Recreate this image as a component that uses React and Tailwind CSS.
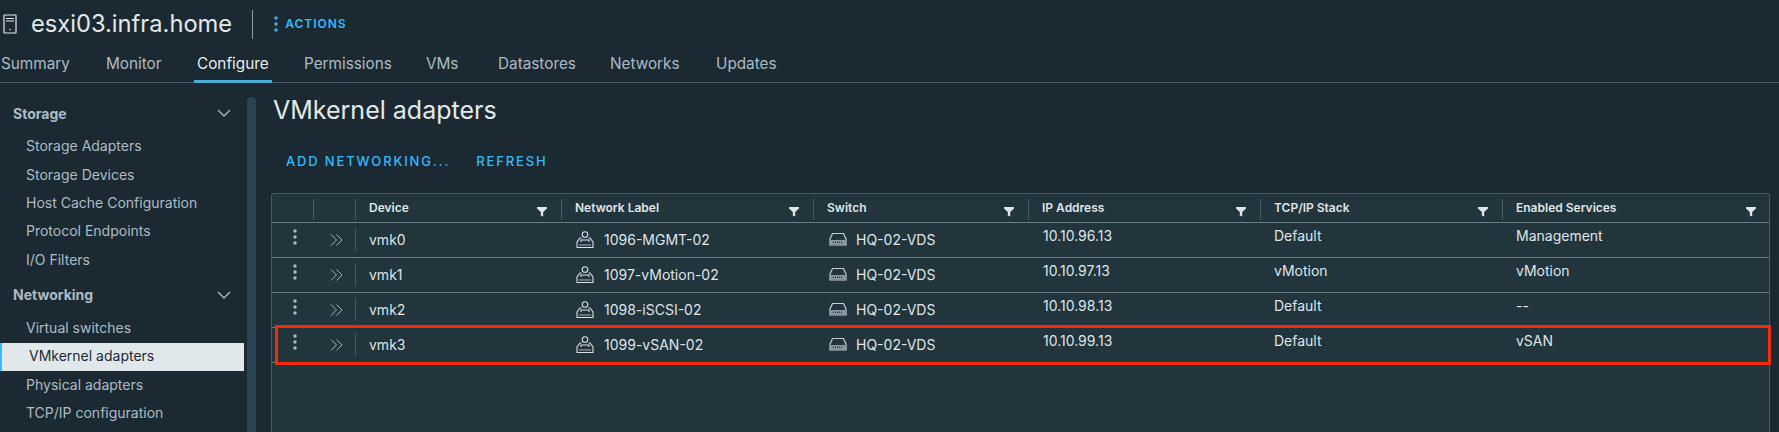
const tabs = [
  { label: "Summary", w: "w-[105px]" },
  { label: "Monitor", w: "w-[91px]" },
  { label: "Configure", w: "w-[107px]", active: true },
  { label: "Permissions", w: "w-[122px]" },
  { label: "VMs", w: "w-[72px]" },
  { label: "Datastores", w: "w-[112px]" },
  { label: "Networks", w: "w-[106px]" },
  { label: "Updates", w: "w-[80px]" },
];

const columns = [
  { label: "Device", w: "w-[206px]" },
  { label: "Network Label", w: "w-[252px]" },
  { label: "Switch", w: "w-[215px]" },
  { label: "IP Address", w: "w-[232px]" },
  { label: "TCP/IP Stack", w: "w-[242px]" },
  { label: "Enabled Services", w: "w-[268px]" },
];

const rows = [
  ["vmk0", "1096-MGMT-02", "10.10.96.13", "Default", "Management"],
  ["vmk1", "1097-vMotion-02", "10.10.97.13", "vMotion", "vMotion"],
  ["vmk2", "1098-iSCSI-02", "10.10.98.13", "Default", "--"],
  ["vmk3", "1099-vSAN-02", "10.10.99.13", "Default", "vSAN"],
];

const HostIcon = () => (
  <svg width="14" height="20" viewBox="0 0 14 20" fill="none" stroke="#e4e8ea" strokeWidth="1.2">
    <rect x="1" y="1" width="12" height="18" rx="0.5" />
    <path d="M3 4.5h8M3 7h8" />
    <circle cx="7" cy="15.5" r="0.8" fill="#e4e8ea" stroke="none" />
  </svg>
);

const Dots = ({ color = "#adbbc4" }) => (
  <svg width="4" height="16" viewBox="0 0 4 16" fill={color}>
    <circle cx="2" cy="2" r="1.7" />
    <circle cx="2" cy="8" r="1.7" />
    <circle cx="2" cy="14" r="1.7" />
  </svg>
);

const FilterIcon = () => (
  <svg width="10" height="10" viewBox="0 0 10 10" fill="#dfe5e8">
    <path d="M0 0h10v1.6L6.2 5v4.6L3.8 8.4V5L0 1.6z" />
  </svg>
);

const Chevrons = () => (
  <svg width="13" height="12" viewBox="0 0 13 12" fill="none" stroke="#a3b0b7" strokeWidth="1">
    <path d="M1 .5l5.500 5.500L1 11.500M6.500 .5L12 6l-5.500 5.500" />
  </svg>
);

const NavChevron = () => (
  <svg width="14" height="8" viewBox="0 0 14 8" fill="none" stroke="#adbbc4" strokeWidth="1.300">
    <path d="M1 1l6 6 6-6" />
  </svg>
);

const PortGroupIcon = () => (
  <svg width="18" height="17" viewBox="0 0 18 17" fill="none" stroke="#dbe1e4" strokeWidth="1.100">
    <circle cx="9" cy="3.500" r="2.800" />
    <path d="M5.500 7H4L1 11v5.500h16V11l-3-4h-1.500" />
    <path d="M5 11V9h8v2" />
    <path d="M3.500 14h11" strokeDasharray="1 1" strokeWidth="1.500" />
  </svg>
);

const SwitchIcon = () => (
  <svg width="18" height="14" viewBox="0 0 18 14" fill="none">
    <path d="M1 13V7l2.500-5.500h11L17 7v6z" stroke="#c4ccd0" strokeWidth="1.200" />
    <path d="M1.500 8h15v4.500h-15z" fill="#8a989f" />
    <path d="M4 10.200h10" stroke="#22343c" strokeWidth="1.500" strokeDasharray="1 1" />
  </svg>
);

const NavItem = ({ children, selected }) =>
  selected ? (
    <div className="mb-[-1px] mt-[1.600px] flex h-[28px] items-center border-l-2 border-[#33bbff] bg-[#e1e8ec] pb-[3px] pl-[27px] text-[#1b2a32]">
      {children}
    </div>
  ) : (
    <div className="flex h-[28.400px] items-center pl-[26px]">{children}</div>
  );

const NavHeading = ({ children }) => (
  <div className="flex h-[34px] items-center justify-between pl-[13px] pr-[13px] font-bold text-[#adbbc4]">
    {children}
    <NavChevron />
  </div>
);

const App = () => {
  return (
    <div className="flex h-[432px] w-[1779px] flex-col overflow-hidden bg-[#1b2a32] font-['Inter',sans-serif] text-[14px] text-[#adbbc4]">
      <div className="flex h-[48px] items-center pl-[3px]">
        <HostIcon />
        <span className="ml-[14px] text-[23.700px] text-[#e4e8ea]">esxi03.infra.home</span>
        <div className="ml-[20px] h-[29px] w-px bg-[#8c9ba3]" />
        <div className="ml-[21px]">
          <Dots color="#49afd9" />
        </div>
        <span className="ml-[7px] text-[12px] font-semibold tracking-[1px] text-[#33bbff]">ACTIONS</span>
      </div>

      <div className="flex h-[35px] border-b border-[#495a63] pl-px">
        {tabs.map((t) => (
          <div key={t.label} className={`${t.w} shrink-0`}>
            <div
              className={
                t.active
                  ? "-mx-[3px] -mb-px inline-block h-[35px] border-b-[3px] border-[#49afd9] px-[3px] pt-[5px] text-[15.300px] text-[#e9ecef]"
                  : "inline-block pt-[5px] text-[15.300px] text-[#adbbc4]"
              }
            >
              {t.label}
            </div>
          </div>
        ))}
      </div>

      <div className="flex min-h-0 flex-1">
        <div className="w-[244px] shrink-0 pt-[13px]">
          <NavHeading>Storage</NavHeading>
          <div className="mt-[1.500px]">
            <NavItem>Storage Adapters</NavItem>
            <NavItem>Storage Devices</NavItem>
            <NavItem>Host Cache Configuration</NavItem>
            <NavItem>Protocol Endpoints</NavItem>
            <NavItem>I/O Filters</NavItem>
          </div>
          <div className="mt-[4.500px]">
            <NavHeading>Networking</NavHeading>
          </div>
          <div className="mt-[1px]">
            <NavItem>Virtual switches</NavItem>
            <NavItem selected>VMkernel adapters</NavItem>
            <NavItem>Physical adapters</NavItem>
            <NavItem>TCP/IP configuration</NavItem>
          </div>
        </div>

        <div className="w-[16px] shrink-0 pl-[3px] pt-[14px]">
          <div className="h-full w-[9px] rounded-t-[4px] bg-[#2a4453]" />
        </div>

        <div className="relative flex-1 pl-[11px]">
          <h1 className="ml-[2px] pt-[12px] text-[25px] leading-[30px] text-[#e4e8ea]">VMkernel adapters</h1>
          <div className="flex h-[52px] items-center pl-[15px] pt-[21px] text-[13px] font-medium tracking-[1.850px] text-[#33bbff]">
            <span>ADD NETWORKING...</span>
            <span className="ml-[26px]">REFRESH</span>
          </div>

          <div className="mt-[16px] h-[260px] w-[1499px] rounded-t-[3px] border border-b-0 border-[#485a63] bg-[#22343c] text-[#dfe5e8]">
            <div className="flex h-[29px] border-b border-[#6a7c84]">
              <div className="w-[42px] shrink-0 py-[5px]">
                <div className="ml-[41px] h-[21px] w-px bg-[#485a63]" />
              </div>
              <div className="w-[42px] shrink-0 py-[5px]">
                <div className="ml-[41px] h-[21px] w-px bg-[#485a63]" />
              </div>
              {columns.map((c) => (
                <div key={c.label} className={`${c.w} relative flex shrink-0 justify-between pl-[13px] pr-[15px]`}>
                  <span className="pt-[5px] text-[12px] font-semibold">{c.label}</span>
                  <span className="pt-[13px]">
                    <FilterIcon />
                  </span>
                  {c.label !== "Enabled Services" && (
                    <div className="absolute right-0 top-[5px] h-[21px] w-px bg-[#485a63]" />
                  )}
                </div>
              ))}
            </div>

            {rows.map((r) => (
              <div key={r[0]} className="flex h-[35px] border-b border-[#6a7c84]">
                <div className="w-[42px] shrink-0 pl-[21px] pt-[6px]">
                  <Dots />
                </div>
                <div className="w-[42px] shrink-0 pt-[5px]">
                  <div className="flex h-[23px] items-center justify-end border-r border-[#485a63] pr-[12px]">
                    <Chevrons />
                  </div>
                </div>
                <div className="flex w-[206px] shrink-0 items-center pb-[2px] pl-[13px]">{r[0]}</div>
                <div className="flex w-[252px] shrink-0 items-center gap-[10px] pb-[2px] pl-[14px]">
                  <PortGroupIcon />
                  {r[1]}
                </div>
                <div className="flex w-[215px] shrink-0 items-center gap-[9px] pb-[2px] pl-[15px]">
                  <SwitchIcon />
                  HQ-02-VDS
                </div>
                <div className="w-[232px] shrink-0 pl-[14px] pt-[2px]">{r[2]}</div>
                <div className="w-[242px] shrink-0 pl-[13px] pt-[2px]">{r[3]}</div>
                <div className="w-[268px] shrink-0 pl-[13px] pt-[2px]">{r[4]}</div>
              </div>
            ))}
          </div>

          <div className="absolute left-[15px] top-[242px] h-[40px] w-[1496px] border-[3px] border-[#f52b07]" />
        </div>
      </div>
    </div>
  );
};

export default App;
